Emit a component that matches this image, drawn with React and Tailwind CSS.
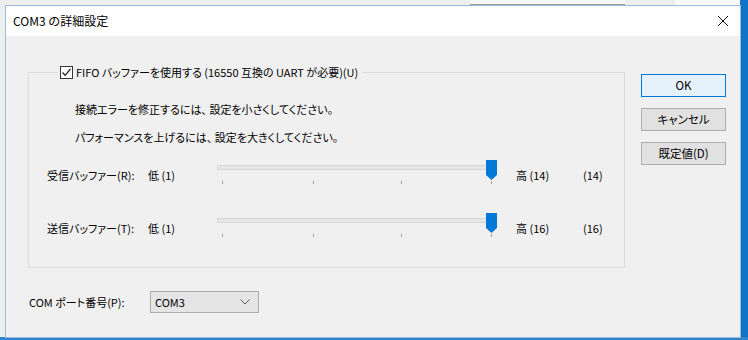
import React from 'react';

const font = { fontFamily: '"Noto Sans CJK JP", "Noto Sans", sans-serif' };
const palt = { fontFeatureSettings: '"palt"' };

const Slider = () => {
  // track 282px wide, thumb at the max end
  const ticks = [5, 96, 184, 274];
  return (
    <svg width="284" height="26" viewBox="0 0 284 26" className="shrink-0">
      <rect x="0.5" y="5.5" width="279" height="4" fill="#e7e7e7" stroke="#d6d6d6" />
      {ticks.map((t) => (
        <line key={t} x1={t + 0.5} y1="21" x2={t + 0.5} y2="24" stroke="#a0a0a0" />
      ))}
      <path d="M269 0 H280 V15 L274.5 20 L269 15 Z" fill="#0078d7" />
    </svg>
  );
};

const BufferRow = ({ label, high, value, className }) => (
  <div className={`flex items-start whitespace-nowrap ${className}`}>
    <span className="w-[101px] pt-[1px]">{label}</span>
    <span className="w-[69px] pt-[1px]">低 (1)</span>
    <div className="-mt-[6px]">
      <Slider />
    </div>
    <span className="ml-[15px] w-[67px] pt-[1px]">高 ({high})</span>
    <span className="pt-[1px]">({value})</span>
  </div>
);

const Button = ({ children, primary }) => (
  <button
    style={palt}
    className={`w-[85px] h-[23px] text-[11.5px] border ${
      primary ? 'border-[#0078d7] bg-[#e5f1fb]' : 'border-[#adadad] bg-[#e1e1e1]'
    } text-black`}
  >
    {children}
  </button>
);

export default function App() {
  return (
    <div className="relative w-[748px] h-[340px] overflow-hidden bg-[#eeeeee] text-[11px] text-black" style={font}>
      {/* desktop behind the dialog */}
      <div className="absolute left-[470px] top-0 w-[155px] h-[5px] bg-[#f7f7f7] border-b border-[#9a9a9a]" />
      <div className="absolute left-[675px] top-0 w-[70px] h-[5px] bg-[#f9f9f9]" />
      <div className="absolute right-0 top-0 w-[8px] h-[340px] bg-[#0f74c8]" />
      <div className="absolute left-0 bottom-0 w-[748px] h-[3px] bg-[#2f86cf]" />

      <div className="relative ml-[5px] mt-[5px] w-[736px] h-[333px] border border-[#9bbbe0] bg-[#f0f0f0] flex flex-col">
        {/* title bar */}
        <div className="h-[30px] bg-white flex items-center justify-between pl-[7px] pr-[11px] shrink-0">
          <span className="text-[12px]">COM3 の詳細設定</span>
          <svg width="12" height="12" viewBox="0 0 12 12">
            <path d="M1 1 L11 11 M11 1 L1 11" stroke="#111" strokeWidth="1" />
          </svg>
        </div>

        <div className="flex" style={palt}>
          {/* left side */}
          <div className="flex flex-col pl-[22px]">
            <fieldset className="mt-[28px] w-[597px] h-[204px] border border-[#dcdcdc]">
              <legend className="ml-[29px] px-[2px] flex items-center h-[16px] whitespace-nowrap">
                <span className="w-[13px] h-[13px] border border-[#333] bg-white flex items-center justify-center">
                  <svg width="11" height="11" viewBox="0 0 11 11">
                    <path d="M1.5 5.5 L4.2 8.3 L9.5 2" fill="none" stroke="#222" strokeWidth="1.3" />
                  </svg>
                </span>
                <span className="ml-[3px] pr-[2px] text-[11px]">FIFO バッファーを使用する (16550 互換の UART が必要)(U)</span>
              </legend>
              <div className="pl-[46px] mt-[21px] leading-[16px] whitespace-nowrap">接続エラーを修正するには、 設定を小さくしてください。</div>
              <div className="pl-[46px] mt-[12px] leading-[16px] whitespace-nowrap">パフォーマンスを上げるには、 設定を大きくしてください。</div>
              <div className="pl-[18px]">
                <BufferRow label="受信バッファー(R):" high={14} value={14} className="mt-[21px]" />
                <BufferRow label="送信バッファー(T):" high={16} value={16} className="mt-[33px]" />
              </div>
            </fieldset>

            <div className="flex items-center mt-[23px] whitespace-nowrap">
              <span className="w-[122px] pl-[1px]">COM ポート番号(P):</span>
              <div className="w-[109px] h-[22px] border border-[#acacac] bg-[#e5e5e5] flex items-center justify-between pl-[4px] pr-[8px]">
                <span>COM3</span>
                <svg width="10" height="6" viewBox="0 0 10 6">
                  <path d="M0.5 0.5 L5 5 L9.5 0.5" fill="none" stroke="#555" strokeWidth="1" />
                </svg>
              </div>
            </div>
          </div>

          {/* buttons */}
          <div className="flex flex-col gap-[11px] ml-[16px] mt-[38px]">
            <Button primary>OK</Button>
            <Button>キャンセル</Button>
            <Button>既定値(D)</Button>
          </div>
        </div>
      </div>
    </div>
  );
}
